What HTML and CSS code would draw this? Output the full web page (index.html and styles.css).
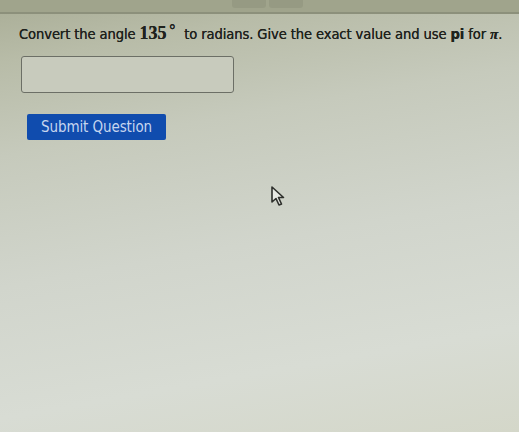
FILE: index.html
```html
<!DOCTYPE html>
<html>
<head>
<meta charset="utf-8">
<link rel="stylesheet" href="styles.css">
</head>
<body>
<div class="topbar">
  <div class="tab"></div>
  <div class="tab"></div>
</div>
<main class="content">
  <p class="question">Convert the angle <span class="num">135</span><sup class="deg">°</sup> to radians. Give the exact value and use <b>pi</b> for <i class="pi">π</i>.</p>
  <div class="answer"></div>
  <button class="submit">Submit Question</button>
  <div class="cursor-row">
    <svg class="cursor" width="16" height="21" viewBox="0 0 16 21">
      <path d="M2 1 L2 16 L6 12.5 L9 19 L11.5 18 L8.5 11.5 L13.5 11.5 Z" fill="#e8eae4" stroke="#2e302c" stroke-width="1.6" stroke-linejoin="round"/>
    </svg>
  </div>
</main>
</body>
</html>
```
FILE: styles.css
```css
html, body {
  margin: 0;
  padding: 0;
  height: 100%;
}
body {
  width: 519px;
  height: 432px;
  overflow: hidden;
  font-family: "DejaVu Sans", "Liberation Sans", sans-serif;
  background: linear-gradient(170deg, #a9ad96 0%, #b8bca8 12%, #c6cabc 30%, #d1d5cc 55%, #d8dcd4 80%, #d4d7c9 100%);
}
.topbar {
  height: 12px;
  border-bottom: 2px solid #8c907b;
  background: #a0a48c;
  display: flex;
  gap: 3px;
  padding-left: 232px;
}
.tab {
  width: 34px;
  height: 8px;
  background: #969a83;
  border-radius: 0 0 3px 3px;
}
.content {
  padding: 9px 0 0 19px;
}
.question {
  margin: 0;
  font-size: 14.6px;
  font-stretch: condensed;
  letter-spacing: -0.1px;
  color: #1f221d;
  line-height: 20px;
  white-space: nowrap;
  text-shadow: 0 0 0.6px #1f221d;
}
.num {
  font-family: "Liberation Serif", serif;
  font-weight: bold;
  font-size: 18px;
  letter-spacing: 0;
}
.deg {
  font-family: "DejaVu Sans", sans-serif;
  font-size: 17px;
  vertical-align: 2px;
  line-height: 0;
  margin-left: 2px;
  margin-right: 4px;
}
.pi {
  font-family: "Liberation Serif", serif;
  font-weight: bold;
  font-size: 15px;
}
.answer {
  margin: 12px 0 0 2px;
  width: 211px;
  height: 35px;
  border: 1px solid #6c6f66;
  border-radius: 3px;
  background: #c8cbbd;
}
.submit {
  display: block;
  margin: 21px 0 0 8px;
  width: 139px;
  height: 26px;
  padding: 0;
  border: none;
  border-radius: 2px;
  background: #104cae;
  color: #c6d5ee;
  font-family: "DejaVu Sans", sans-serif;
  font-stretch: condensed;
  font-size: 15px;
  letter-spacing: -0.1px;
}
.cursor-row {
  padding: 46px 0 0 251px;
}
.cursor {
  display: block;
}
```
